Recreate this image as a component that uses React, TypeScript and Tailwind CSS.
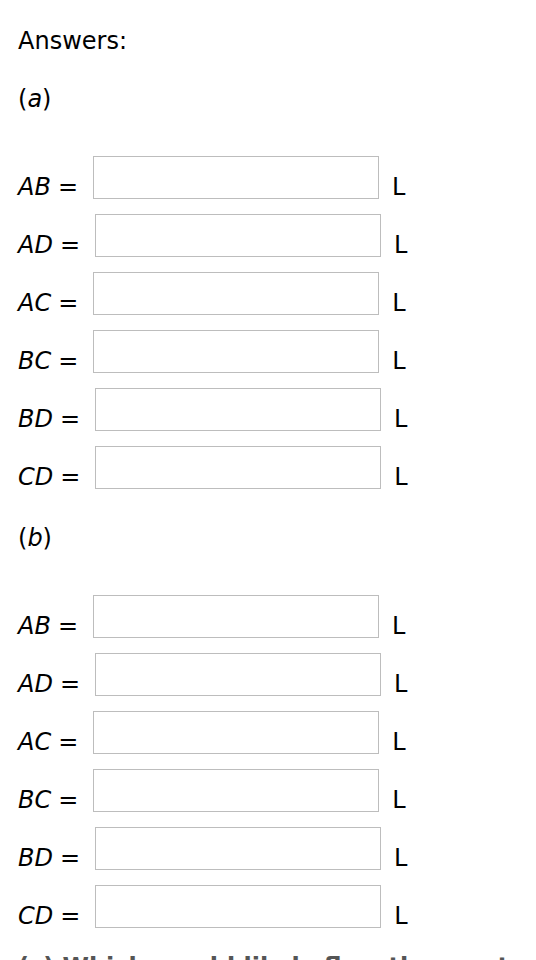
import React from "react";

const rows = [
  ["A", "B"],
  ["A", "D"],
  ["A", "C"],
  ["B", "C"],
  ["B", "D"],
  ["C", "D"],
];

function AnswerRow({ label }: { label: string }) {
  return (
    <div className="flex items-end h-[43px]">
      <span className="italic leading-none">{label}</span>
      <span className="leading-none ml-[7px]">=</span>
      <input
        type="text"
        className="ml-[15px] w-[286px] h-[43px] border border-[#bdbdbd] bg-white outline-none"
      />
      <span className="leading-none ml-[13px]">L</span>
    </div>
  );
}

function Part({ name }: { name: string }) {
  return (
    <div>
      <div className="leading-none">
        (<span className="italic">{name}</span>)
      </div>
      {/* answer boxes */}
      <div className="flex flex-col gap-[15px] mt-[45px]">
        {rows.map(([a, b]) => (
          <AnswerRow key={a + b} label={a + b} />
        ))}
      </div>
    </div>
  );
}

export default function App() {
  return (
    <div
      className="bg-white text-black text-[24px] pl-[18px] pt-[29px] h-[960px] overflow-hidden"
      style={{ fontFamily: '"DejaVu Sans", Verdana, sans-serif' }}
    >
      <div className="leading-none">Answers:</div>
      <div className="mt-[34px]">
        <Part name="a" />
      </div>
      <div className="mt-[37px]">
        <Part name="b" />
      </div>
      <div className="mt-[27px] leading-none font-bold text-[#555] whitespace-nowrap">
        (c) Which would likely flow the most water?
      </div>
    </div>
  );
}
